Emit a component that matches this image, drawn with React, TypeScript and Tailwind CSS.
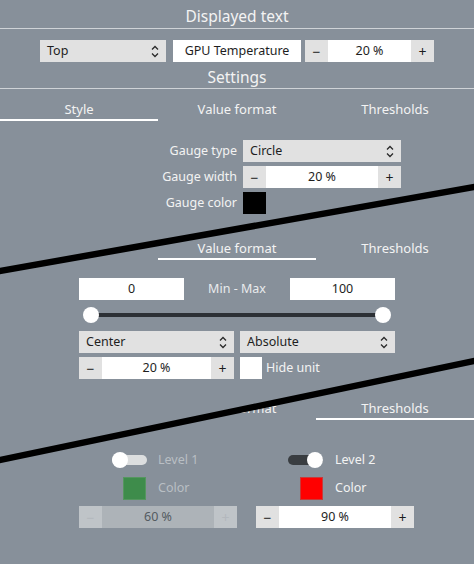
import React from 'react';

const UpDown = () => (
    <svg width="8" height="13" viewBox="0 0 8 13" fill="none" stroke="#2a2a2a" strokeWidth="1.3">
        <path d="M1 4.5 4 1.5 7 4.5" />
        <path d="M1 8.5 4 11.5 7 8.5" />
    </svg>
);

const Select = ({ label, className = '' }: { label: string; className?: string }) => (
    <div className={`flex items-center justify-between h-[22px] bg-[#e1e1e1] pl-[7px] pr-[7px] text-[12.5px] text-[#1e1e1e] ${className}`}>
        <span>{label}</span>
        <UpDown />
    </div>
);

const Spin = ({ value, className = '', disabled = false }: { value: string; className?: string; disabled?: boolean }) => (
    <div className={`flex h-[22px] text-[12.5px] ${className}`}>
        <div className={`w-[23px] flex items-center justify-center text-[14px] ${disabled ? 'bg-[#bfc4c8] text-[#b3b8bd]' : 'bg-[#e1e1e1] text-[#1e1e1e]'}`}>−</div>
        <div className={`flex-1 flex items-center justify-center ${disabled ? 'bg-[#adb3b8] text-[#545b61]' : 'bg-white text-[#1e1e1e]'}`}>{value}</div>
        <div className={`w-[23px] flex items-center justify-center text-[14px] ${disabled ? 'bg-[#bfc4c8] text-[#b3b8bd]' : 'bg-[#e1e1e1] text-[#1e1e1e]'}`}>+</div>
    </div>
);

const Tabs = ({ active }: { active: number }) => (
    <div className="flex">
        {['Style', 'Value format', 'Thresholds'].map((t, i) => (
            <div
                key={t}
                className={`w-[158px] pt-[10px] text-center text-[13px] leading-[20px] border-b-2 ${i === active ? 'border-white' : 'border-transparent'}`}
            >
                {t}
            </div>
        ))}
    </div>
);

const Toggle = ({ on }: { on: boolean }) => (
    <div className="relative w-[35px] h-[16px] flex items-center">
        <div className={`w-full h-[10px] rounded-full ${on ? 'bg-[#393d41]' : 'bg-[#dcdedf]'}`} />
        <div className={`absolute top-0 w-[16px] h-[16px] rounded-full bg-white ${on ? 'right-0' : 'left-0'}`} />
    </div>
);

const Level = ({ name, on, color, value }: { name: string; on: boolean; color: string; value: string }) => {
    const labelCls = on ? 'text-[#f3f3f3]' : 'text-[#b9bfc4]';
    return (
        <div className="w-[158px] flex flex-col text-[12.5px]">
            <div className="grid grid-cols-[79px_79px] h-[22px] items-center">
                <div className={`flex justify-end ${on ? 'pr-[12px]' : 'pr-[11px]'}`}>
                    <Toggle on={on} />
                </div>
                <span className={labelCls}>{name}</span>
            </div>
            <div className="mt-[6px] grid grid-cols-[79px_79px] h-[23px] items-center">
                <div className="flex justify-end pr-[12px]">
                    <div className={`w-[23px] h-[23px] border ${color}`} />
                </div>
                <span className={labelCls}>Color</span>
            </div>
            <Spin value={value} disabled={!on} className="mt-[6px] w-full" />
        </div>
    );
};

export default function App() {
    return (
        <div className="relative w-[474px] h-[564px] overflow-hidden bg-[#87909a] text-[#f3f3f3] font-['Noto_Sans',sans-serif]">
            {/* Displayed text */}
            <div className="pt-[5px] pb-px text-center text-[15.5px] leading-[22px] border-b border-[#cfd3d7]">Displayed text</div>
            <div className="mt-[11px] flex justify-center">
                <Select label="Top" className="w-[126px]" />
                <div className="ml-[7px] w-[128px] h-[22px] bg-white flex items-center justify-center text-[12.5px] text-[#1e1e1e]">GPU Temperature</div>
                <Spin value="20 %" className="ml-[4px] w-[129px]" />
            </div>

            {/* Settings / Style */}
            <div className="pt-[4px] text-center text-[15.5px] leading-[22px] border-b border-[#cfd3d7]">Settings</div>
            <Tabs active={0} />
            <div className="mt-[19px] grid grid-cols-[237px_158px] gap-x-[6px] gap-y-[4px] items-center text-[12.5px]">
                <span className="text-right">Gauge type</span>
                <Select label="Circle" />
                <span className="text-right">Gauge width</span>
                <Spin value="20 %" />
                <span className="text-right">Gauge color</span>
                <div className="w-[23px] h-[22px] bg-black" />
            </div>

            {/* Value format */}
            <div className="pt-[14px] [clip-path:polygon(0_57px,100%_-27px,100%_100%,0_100%)]">
                <Tabs active={1} />
                <div className="mt-[18px] mx-auto w-[316px] flex items-center justify-between text-[12.5px]">
                    <div className="w-[105px] h-[22px] bg-white flex items-center justify-center text-[#1e1e1e]">0</div>
                    <span className="text-[#e9ebed]">Min - Max</span>
                    <div className="w-[105px] h-[22px] bg-white flex items-center justify-center text-[#1e1e1e]">100</div>
                </div>
                <div className="mt-[7px] mx-auto w-[316px] px-[4px]">
                    <div className="relative h-[16px] flex items-center justify-between">
                        <div className="absolute left-[8px] right-[8px] h-[4px] bg-[#2c3035]" />
                        <div className="relative w-[16px] h-[16px] rounded-full bg-white" />
                        <div className="relative w-[16px] h-[16px] rounded-full bg-white" />
                    </div>
                </div>
                <div className="mt-[8px] mx-auto w-[316px] flex justify-between">
                    <Select label="Center" className="w-[155px]" />
                    <Select label="Absolute" className="w-[155px]" />
                </div>
                <div className="mt-[4px] mx-auto w-[316px] flex items-center text-[12.5px]">
                    <Spin value="20 %" className="w-[155px]" />
                    <div className="ml-[6px] w-[22px] h-[22px] bg-white" />
                    <span className="ml-[4px]">Hide unit</span>
                </div>
            </div>

            {/* Thresholds */}
            <div className="pt-[9px] h-[185px] [clip-path:polygon(0_81px,100%_-18px,100%_100%,0_100%)]">
                <Tabs active={2} />
                <div className="mt-[29px] pl-[79px] flex gap-[19px]">
                    <Level name="Level 1" on={false} color="bg-[#3e8c4b] border-[#55965f]" value="60 %" />
                    <Level name="Level 2" on color="bg-[#ff0000] border-[#c83a3a]" value="90 %" />
                </div>
            </div>

            {/* cut lines between the three captures */}
            <svg className="absolute inset-0 pointer-events-none" width="474" height="564" viewBox="0 0 474 564">
                <line x1="-10" y1="272.8" x2="484" y2="185.2" stroke="#000" strokeWidth="6.5" />
                <line x1="-10" y1="462.1" x2="484" y2="358.9" stroke="#000" strokeWidth="6.5" />
            </svg>
        </div>
    );
}
